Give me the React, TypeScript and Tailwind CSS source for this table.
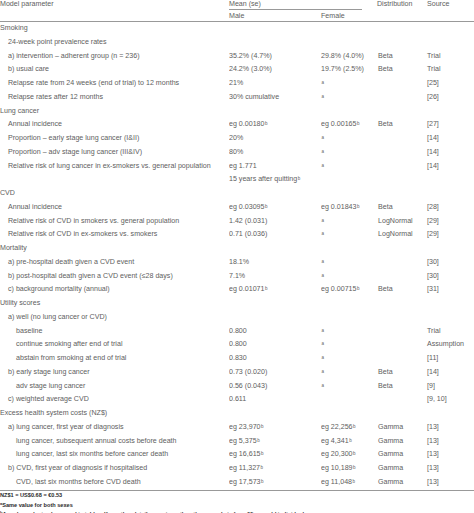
type Row = {
  level: number;
  label: string;
  male?: string;
  maleSup?: string;
  female?: string;
  femaleSup?: string;
  dist?: string;
  source?: string;
};

const rows: Row[] = [
  { level: 0, label: "Smoking" },
  { level: 1, label: "24-week point prevalence rates" },
  { level: 1, label: "a) intervention – adherent group (n = 236)", male: "35.2% (4.7%)", female: "29.8% (4.0%)", dist: "Beta", source: "Trial" },
  { level: 1, label: "b) usual care", male: "24.2% (3.0%)", female: "19.7% (2.5%)", dist: "Beta", source: "Trial" },
  { level: 1, label: "Relapse rate from 24 weeks (end of trial) to 12 months", male: "21%", femaleSup: "a", source: "[25]" },
  { level: 1, label: "Relapse rates after 12 months", male: "30% cumulative", femaleSup: "a", source: "[26]" },
  { level: 0, label: "Lung cancer" },
  { level: 1, label: "Annual incidence", male: "eg 0.00180", maleSup: "b", female: "eg 0.00165", femaleSup: "b", dist: "Beta", source: "[27]" },
  { level: 1, label: "Proportion – early stage lung cancer (I&II)", male: "20%", femaleSup: "a", source: "[14]" },
  { level: 1, label: "Proportion – adv stage lung cancer (III&IV)", male: "80%", femaleSup: "a", source: "[14]" },
  { level: 1, label: "Relative risk of lung cancer in ex-smokers vs. general population", male: "eg 1.771", femaleSup: "a", source: "[14]" },
  { level: 1, label: "", male: "15 years after quitting", maleSup: "b" },
  { level: 0, label: "CVD" },
  { level: 1, label: "Annual incidence", male: "eg 0.03095", maleSup: "b", female: "eg 0.01843", femaleSup: "b", dist: "Beta", source: "[28]" },
  { level: 1, label: "Relative risk of CVD in smokers vs. general population", male: "1.42 (0.031)", femaleSup: "a", dist: "LogNormal", source: "[29]" },
  { level: 1, label: "Relative risk of CVD in ex-smokers vs. smokers", male: "0.71 (0.036)", femaleSup: "a", dist: "LogNormal", source: "[29]" },
  { level: 0, label: "Mortality" },
  { level: 1, label: "a) pre-hospital death given a CVD event", male: "18.1%", femaleSup: "a", source: "[30]" },
  { level: 1, label: "b) post-hospital death given a CVD event (≤28 days)", male: "7.1%", femaleSup: "a", source: "[30]" },
  { level: 1, label: "c) background mortality (annual)", male: "eg 0.01071", maleSup: "b", female: "eg 0.00715", femaleSup: "b", dist: "Beta", source: "[31]" },
  { level: 0, label: "Utility scores" },
  { level: 1, label: "a) well (no lung cancer or CVD)" },
  { level: 2, label: "baseline", male: "0.800", femaleSup: "a", source: "Trial" },
  { level: 2, label: "continue smoking after end of trial", male: "0.800", femaleSup: "a", source: "Assumption" },
  { level: 2, label: "abstain from smoking at end of trial", male: "0.830", femaleSup: "a", source: "[11]" },
  { level: 1, label: "b) early stage lung cancer", male: "0.73 (0.020)", femaleSup: "a", dist: "Beta", source: "[14]" },
  { level: 2, label: "adv stage lung cancer", male: "0.56 (0.043)", femaleSup: "a", dist: "Beta", source: "[9]" },
  { level: 1, label: "c) weighted average CVD", male: "0.611", source: "[9, 10]" },
  { level: 0, label: "Excess health system costs (NZ$)" },
  { level: 1, label: "a) lung cancer, first year of diagnosis", male: "eg 23,970", maleSup: "b", female: "eg 22,256", femaleSup: "b", dist: "Gamma", source: "[13]" },
  { level: 2, label: "lung cancer, subsequent annual costs before death", male: "eg 5,375", maleSup: "b", female: "eg 4,341", femaleSup: "b", dist: "Gamma", source: "[13]" },
  { level: 2, label: "lung cancer, last six months before cancer death", male: "eg 16,615", maleSup: "b", female: "eg 20,300", femaleSup: "b", dist: "Gamma", source: "[13]" },
  { level: 1, label: "b) CVD, first year of diagnosis if hospitalised", male: "eg 11,327", maleSup: "b", female: "eg 10,189", femaleSup: "b", dist: "Gamma", source: "[13]" },
  { level: 2, label: "CVD, last six months before CVD death", male: "eg 17,573", maleSup: "b", female: "eg 11,048", femaleSup: "b", dist: "Gamma", source: "[13]" },
];

const indent = ["pl-0", "pl-[8px]", "pl-[16px]"];

function Cell({ text, sup }: { text?: string; sup?: string }) {
  return (
    <div className="overflow-hidden">
      {text}
      {sup && <sup className="text-[4.5px] relative -top-[1px] ml-[0.5px]">{sup}</sup>}
    </div>
  );
}

export default function App() {
  return (
    <div
      className="w-[474px] h-[513px] overflow-hidden bg-white text-[#5e5e5e] text-[7.1px] whitespace-nowrap"
      style={{ fontFamily: '"Liberation Sans", Arial, sans-serif' }}
    >
      {/* header */}
      <div className="border-b border-[#999]">
        <div className="grid grid-cols-[229px_148px_50px_1fr] h-[9px] leading-[9px]">
          <div>Model parameter</div>
          <div className="pr-[15px]">
            <div className="border-b border-[#999] h-[10px]">Mean (se)</div>
          </div>
          <div>Distribution</div>
          <div>Source</div>
        </div>
        <div className="grid grid-cols-[229px_92px_1fr] h-[12px] leading-[12px] pt-[1px]">
          <div />
          <div>Male</div>
          <div>Female</div>
        </div>
      </div>

      {/* body */}
      <div className="border-b border-[#999]">
        {rows.map((r, i) => (
          <div key={i} className="grid grid-cols-[229px_92px_57px_49px_1fr] h-[13.76px] leading-[13.76px]">
            <div className={indent[r.level]}>{r.label}</div>
            <Cell text={r.male} sup={r.maleSup} />
            <Cell text={r.female} sup={r.femaleSup} />
            <div>{r.dist}</div>
            <div>{r.source}</div>
          </div>
        ))}
      </div>

      {/* footnotes */}
      <div className="text-[#2a2a2a] font-bold text-[5.6px] leading-[9.5px] pt-[0.5px]">
        <div>NZ$1 = US$0.68 = €0.53</div>
        <div>
          <sup className="text-[4px]">a</sup>Same value for both sexes
        </div>
        <div>
          <sup className="text-[4px]">b</sup>Age-dependent values used in tables. If no other details are given, then the example is for a 65 year old individual
        </div>
      </div>
    </div>
  );
}
